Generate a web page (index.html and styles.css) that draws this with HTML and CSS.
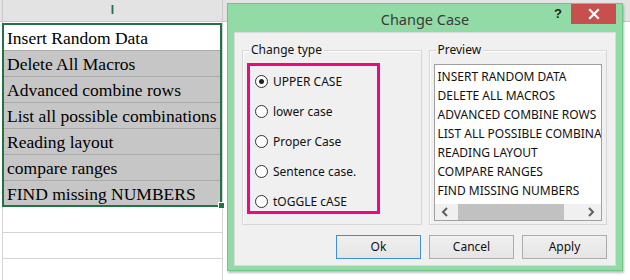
FILE: index.html
```html
<!DOCTYPE html>
<html>
<head>
<meta charset="utf-8">
<link rel="stylesheet" href="styles.css">
</head>
<body>
<div class="sheet">
  <div class="colhead"><div class="hcell hleft"></div><div class="hcell hmain">I</div><div class="hcell hright"></div></div>
  <div class="body">
    <div class="gutter"></div>
    <div class="col">
      <div class="sel">
        <div class="row active">Insert Random Data</div>
        <div class="row">Delete All Macros</div>
        <div class="row">Advanced combine rows</div>
        <div class="row">List all possible combinations</div>
        <div class="row">Reading layout</div>
        <div class="row">compare ranges</div>
        <div class="row last">FIND missing NUMBERS</div>
        <span class="handle"></span>
      </div>
      <div class="empty"></div>
      <div class="empty"></div>
      <div class="empty"></div>
    </div>
    <div class="rest"></div>
  </div>
</div>

<div class="dialog">
  <div class="titlebar">
    <div class="title">Change Case</div>
    <div class="help">?</div>
    <div class="close">
      <svg width="12" height="12" viewBox="0 0 12 12"><path d="M2 2 L10 10 M10 2 L2 10" stroke="#fff" stroke-width="2.2" stroke-linecap="square"/></svg>
    </div>
  </div>
  <div class="panel">
    <div class="groups">
      <div class="group gtype">
        <div class="legend">Change type</div>
        <div class="pink">
          <div class="opt"><span class="radio on"></span>UPPER CASE</div>
          <div class="opt"><span class="radio"></span>lower case</div>
          <div class="opt"><span class="radio"></span>Proper Case</div>
          <div class="opt"><span class="radio"></span>Sentence case.</div>
          <div class="opt"><span class="radio"></span>tOGGLE cASE</div>
        </div>
      </div>
      <div class="group gprev">
        <div class="legend">Preview</div>
        <div class="list">
          <div class="items">
            <div class="item">INSERT RANDOM DATA</div>
            <div class="item">DELETE ALL MACROS</div>
            <div class="item">ADVANCED COMBINE ROWS</div>
            <div class="item">LIST ALL POSSIBLE COMBINATIONS</div>
            <div class="item">READING LAYOUT</div>
            <div class="item">COMPARE RANGES</div>
            <div class="item">FIND MISSING NUMBERS</div>
          </div>
          <div class="hscroll">
            <svg class="arr" width="8" height="10" viewBox="0 0 8 10"><path d="M6 1 L2 5 L6 9" fill="none" stroke="#606060" stroke-width="2"/></svg>
            <div class="track"><div class="thumb"></div></div>
            <svg class="arr" width="8" height="10" viewBox="0 0 8 10"><path d="M2 1 L6 5 L2 9" fill="none" stroke="#606060" stroke-width="2"/></svg>
          </div>
        </div>
      </div>
    </div>
    <div class="buttons">
      <div class="btn def">Ok</div>
      <div class="btn">Cancel</div>
      <div class="btn">Apply</div>
    </div>
  </div>
</div>
</body>
</html>
```

FILE: styles.css
```css
html, body {
  margin: 0;
  padding: 0;
  width: 630px;
  height: 280px;
  overflow: hidden;
  background: #ffffff;
}

.sheet {
  width: 630px;
  height: 280px;
}

.colhead {
  display: flex;
  height: 22px;
  background: #e3e3e3;
  border-bottom: 1px solid #c9c9c9;
  box-sizing: border-box;
}
.hcell {
  height: 22px;
  box-sizing: border-box;
}
.hleft { width: 3px; border-right: 1px solid #c9c9c9; }
.hmain {
  width: 220px;
  border-right: 1px solid #c9c9c9;
  color: #217346;
  font-family: "Liberation Sans", Arial, sans-serif;
  font-size: 12px;
  font-weight: bold;
  text-align: center;
  line-height: 20px;
}
.hright { flex: 1; }

.body {
  display: flex;
}
.gutter {
  width: 3px;
  height: 258px;
  border-right: 1px solid #d4d4d4;
  box-sizing: border-box;
}
.col {
  width: 220px;
  border-right: 1px solid #d4d4d4;
  box-sizing: border-box;
}
.sel {
  position: relative;
  margin-left: -1px;
  margin-top: 1px;
  border: 2px solid #217346;
  background: #c6c6c6;
}
.row {
  height: 25px;
  border-bottom: 1px solid #ababab;
  font-family: "Liberation Serif", "Times New Roman", serif;
  font-size: 17.5px;
  line-height: 26px;
  padding-left: 3px;
  color: #000;
  white-space: nowrap;
}
.row.active { background: #fff; }
.row.last { border-bottom: none; height: 24px; }
.handle {
  position: absolute;
  right: -5px;
  bottom: -4px;
  width: 5px;
  height: 5px;
  background: #217346;
  border: 1px solid #fff;
}
.empty {
  height: 25px;
  border-bottom: 1px solid #d4d4d4;
}
.rest { flex: 1; }

/* dialog */
.dialog {
  position: absolute;
  left: 227px;
  top: 3px;
  width: 396px;
  height: 268px;
  box-sizing: border-box;
  background: #93dba6;
  border: 1px solid #72c48a;
  box-shadow: 1px 2px 2px rgba(0,0,0,0.25);
  display: flex;
  flex-direction: column;
  font-family: "Noto Sans", "Open Sans", sans-serif;
}
.titlebar {
  position: relative;
  height: 28px;
  flex: none;
}
.title {
  text-align: center;
  font-size: 14.5px;
  line-height: 30px;
  color: #3a3a3a;
}
.help {
  position: absolute;
  left: 326px;
  top: 0;
  font-family: "Liberation Sans", Arial, sans-serif;
  font-weight: bold;
  font-size: 13px;
  line-height: 20px;
  color: #222;
}
.close {
  position: absolute;
  left: 343px;
  top: 0;
  width: 45px;
  height: 20px;
  background: #c7504f;
  display: flex;
  align-items: center;
  justify-content: center;
}
.panel {
  flex: 1;
  margin: 0 6px 4px 6px;
  background: #f0f0f0;
  border: 1px solid #dadada;
  box-sizing: border-box;
  display: flex;
  flex-direction: column;
  padding: 17px 8px 0 7px;
}
.groups {
  display: flex;
  gap: 7px;
  height: 175px;
}
.group {
  position: relative;
  border: 1px solid #d6d6d6;
  box-shadow: inset 1px 1px 0 #fff;
  box-sizing: border-box;
  height: 175px;
}
.gtype { width: 180px; }
.gprev { width: 179px; }
.legend {
  position: absolute;
  top: -10px;
  left: 6px;
  padding: 0 2px;
  background: #f0f0f0;
  font-size: 12px;
  line-height: 18px;
  color: #111;
}
.pink {
  margin: 12px 0 0 4px;
  width: 133px;
  height: 151px;
  box-sizing: border-box;
  border: 3px solid #ee0a7e;
  padding-top: 1px;
}
.opt {
  display: flex;
  align-items: center;
  height: 29.8px;
  font-size: 12px;
  color: #111;
  white-space: nowrap;
}
.radio {
  width: 13px;
  height: 13px;
  box-sizing: border-box;
  border: 1px solid #333;
  border-radius: 50%;
  background: #fff;
  margin: 0 5px 0 5px;
  display: flex;
  align-items: center;
  justify-content: center;
}
.radio.on::after {
  content: "";
  width: 5px;
  height: 5px;
  border-radius: 50%;
  background: #222;
}
.list {
  margin: 13px 0 0 4px;
  width: 168px;
  height: 157px;
  box-sizing: border-box;
  border: 1px solid #a0a0a0;
  background: #fff;
  display: flex;
  flex-direction: column;
  overflow: hidden;
}
.items {
  flex: 1;
  padding: 2px 0 0 3px;
  overflow: hidden;
}
.item {
  height: 19px;
  line-height: 19px;
  font-size: 12px;
  color: #111;
  white-space: nowrap;
}
.hscroll {
  height: 16px;
  display: flex;
  align-items: center;
  background: #f0f0f0;
  padding: 0 6px;
  gap: 6px;
}
.track { flex: 1; height: 16px; }
.thumb {
  margin-left: 3px;
  width: 106px;
  height: 16px;
  background: #c1c1c1;
}
.buttons {
  display: flex;
  justify-content: flex-end;
  gap: 8px;
  margin-top: 10px;
}
.btn {
  width: 85px;
  height: 24px;
  box-sizing: border-box;
  border: 1px solid #acacac;
  background: linear-gradient(#f0f0f0, #e5e5e5);
  font-size: 12px;
  line-height: 22px;
  text-align: center;
  color: #111;
}
.btn.def { border-color: #3c8fd8; }
```
